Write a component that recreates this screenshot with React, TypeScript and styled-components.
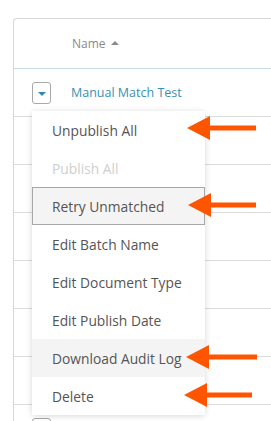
import React from "react";
import styled, { createGlobalStyle } from "styled-components";

const Global = createGlobalStyle`
  html, body { margin: 0; padding: 0; background: #fff; }
  body { font-family: "Open Sans", "Noto Sans", sans-serif; width: 271px; height: 421px; overflow: hidden; }
`;

const Page = styled.div`
  position: relative;
  width: 271px;
  height: 421px;
  overflow: hidden;
  padding: 18px 0 0 13px;
  box-sizing: border-box;
`;

const Table = styled.div`
  border-left: 1px solid #d6d6d6;
  border-top: 1px solid #d6d6d6;
  border-top-left-radius: 4px;
  width: 300px;
`;

const HeaderRow = styled.div`
  display: flex;
  align-items: center;
  height: 49px;
  border-bottom: 1px solid #c9d9e3;
  padding-left: 58px;
  font-size: 12px;
  color: #8a8a8a;
  gap: 5px;
`;

const SortIcon = styled.span`
  width: 0;
  height: 0;
  border-left: 4px solid transparent;
  border-right: 4px solid transparent;
  border-bottom: 4px solid #8a8a8a;
  margin-top: -1px;
`;

const Row = styled.div`
  display: flex;
  align-items: center;
  height: 47px;
  border-bottom: 1px solid #dcdcdc;
  padding-left: 18px;
`;

const DropButton = styled.div`
  width: 19px;
  height: 22px;
  border: 1px solid #a9a9a9;
  border-radius: 3px;
  box-sizing: border-box;
  display: flex;
  align-items: center;
  justify-content: center;
  margin-right: 20px;
  background: #fff;
  &::after {
    content: "";
    width: 0;
    height: 0;
    border-left: 4px solid transparent;
    border-right: 4px solid transparent;
    border-top: 4px solid #2f87b5;
    margin-top: 2px;
  }
`;

const RowName = styled.span`
  font-size: 12.5px;
  color: #3791b5;
`;

const Menu = styled.div`
  position: absolute;
  left: 32px;
  top: 111px;
  width: 173px;
  background: #fff;
  border-radius: 3px;
  box-shadow: 0 1px 6px rgba(0, 0, 0, 0.16);
  display: flex;
  flex-direction: column;
`;

const Item = styled.div<{ $disabled?: boolean; $hover?: boolean; $focus?: boolean }>`
  height: 38px;
  display: flex;
  align-items: center;
  padding-left: 19px;
  box-sizing: border-box;
  font-size: 13.8px;
  white-space: nowrap;
  color: ${(p) => (p.$disabled ? "#cfcfcf" : "#555")};
  background: ${(p) => (p.$hover || p.$focus ? "#f4f4f4" : "#fff")};
  border: ${(p) => (p.$focus ? "1px solid #a8a8a8" : "1px solid transparent")};
`;

const Arrow = styled.svg`
  position: absolute;
  overflow: visible;
`;

function OrangeArrow({ x, y, len }: { x: number; y: number; len: number }) {
  return (
    <Arrow style={{ left: x, top: y - 13 }} width={len} height={26} viewBox={`0 0 ${len} 26`}>
      <polygon points={`0,13 23,1 23,25`} fill="#ff5500" />
      <rect x={20} y={10.5} width={len - 20} height={5} fill="#ff5500" />
    </Arrow>
  );
}

const items = [
  { label: "Unpublish All" },
  { label: "Publish All", disabled: true },
  { label: "Retry Unmatched", focus: true },
  { label: "Edit Batch Name" },
  { label: "Edit Document Type" },
  { label: "Edit Publish Date" },
  { label: "Download Audit Log", hover: true },
  { label: "Delete" },
];

export default function App() {
  return (
    <>
      <Global />
      <Page>
        <Table>
          <HeaderRow>
            Name <SortIcon />
          </HeaderRow>
          {Array.from({ length: 8 }).map((_, i) => (
            <Row key={i}>
              <DropButton />
              {i === 0 && <RowName>Manual Match Test</RowName>}
            </Row>
          ))}
        </Table>
        <Menu>
          {items.map((it) => (
            <Item key={it.label} $disabled={it.disabled} $hover={it.hover} $focus={it.focus}>
              {it.label}
            </Item>
          ))}
        </Menu>
        <OrangeArrow x={187} y={128} len={69} />
        <OrangeArrow x={188} y={205} len={68} />
        <OrangeArrow x={186} y={357} len={71} />
        <OrangeArrow x={184} y={395} len={68} />
      </Page>
    </>
  );
}
